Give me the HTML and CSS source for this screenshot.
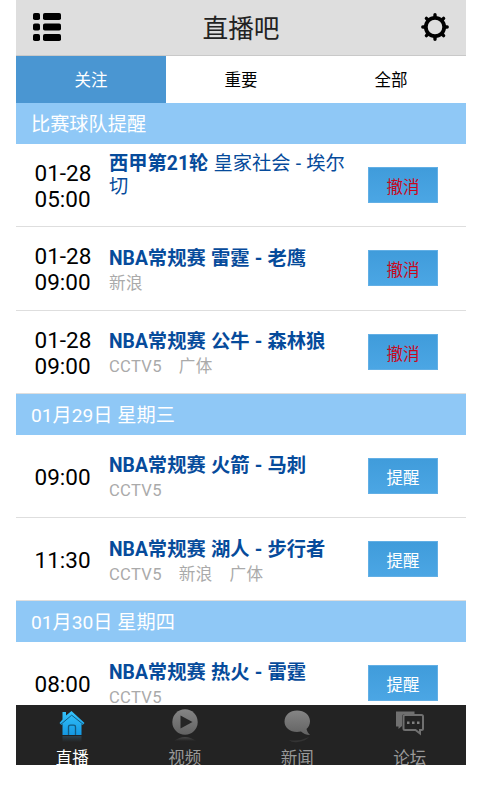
FILE: index.html
```
<!DOCTYPE html>
<html lang="zh-CN">
<head>
  <meta charset="UTF-8">
  <meta name="viewport" content="width=device-width, initial-scale=1.0">
  <title>直播吧</title>
  <link rel="stylesheet" href="styles.css">
</head>
<body>
  <div class="app">
    <header class="header">
      <svg class="menu-icon" width="28" height="28" viewBox="0 0 28 28">
        <rect x="0" y="0" width="7" height="7" rx="1.8"/>
        <rect x="10" y="0" width="18" height="7" rx="1.8"/>
        <rect x="0" y="10.5" width="7" height="7" rx="1.8"/>
        <rect x="10" y="10.5" width="18" height="7" rx="1.8"/>
        <rect x="0" y="21" width="7" height="7" rx="1.8"/>
        <rect x="10" y="21" width="18" height="7" rx="1.8"/>
      </svg>
      <h1>直播吧</h1>
      <svg class="gear-icon" width="28" height="28" viewBox="-14 -14 28 28">
        <circle r="9.2" fill="none" stroke="#000" stroke-width="3.8"/>
        <g stroke="#000" stroke-width="3.4" stroke-linecap="round">
          <path d="M0-10V-12.2M0 10V12.2M-10 0H-12.2M10 0H12.2"/>
          <path d="M-7-7L-8.6-8.6M7-7L8.6-8.6M-7 7L-8.6 8.6M7 7L8.6 8.6"/>
        </g>
      </svg>
    </header>

    <nav class="tabs">
      <a class="tab active">关注</a>
      <a class="tab">重要</a>
      <a class="tab">全部</a>
    </nav>

    <main class="list">
      <h2 class="section">比赛球队提醒</h2>
      <div class="row">
        <div class="time">01-28<br>05:00</div>
        <div class="info">
          <div class="match"><b>西甲第21轮</b> 皇家社会 - 埃尔切</div>
          <div class="channel"></div>
        </div>
        <button class="btn cancel">撤消</button>
      </div>
      <div class="row">
        <div class="time">01-28<br>09:00</div>
        <div class="info">
          <div class="match"><b>NBA常规赛 雷霆 - 老鹰</b></div>
          <div class="channel"><span>新浪</span></div>
        </div>
        <button class="btn cancel">撤消</button>
      </div>
      <div class="row">
        <div class="time">01-28<br>09:00</div>
        <div class="info">
          <div class="match"><b>NBA常规赛 公牛 - 森林狼</b></div>
          <div class="channel"><span>CCTV5</span><span>广体</span></div>
        </div>
        <button class="btn cancel">撤消</button>
      </div>

      <h2 class="section">01月29日 星期三</h2>
      <div class="row">
        <div class="time">09:00</div>
        <div class="info">
          <div class="match"><b>NBA常规赛 火箭 - 马刺</b></div>
          <div class="channel"><span>CCTV5</span></div>
        </div>
        <button class="btn">提醒</button>
      </div>
      <div class="row">
        <div class="time">11:30</div>
        <div class="info">
          <div class="match"><b>NBA常规赛 湖人 - 步行者</b></div>
          <div class="channel"><span>CCTV5</span><span>新浪</span><span>广体</span></div>
        </div>
        <button class="btn">提醒</button>
      </div>

      <h2 class="section">01月30日 星期四</h2>
      <div class="row">
        <div class="time">08:00</div>
        <div class="info">
          <div class="match"><b>NBA常规赛 热火 - 雷霆</b></div>
          <div class="channel"><span>CCTV5</span></div>
        </div>
        <button class="btn">提醒</button>
      </div>
    </main>

    <footer class="bottom-nav">
      <a class="nav-item active">
        <svg width="32" height="36" viewBox="0 0 32 36">
          <defs>
            <linearGradient id="blue" x1="0" y1="0" x2="0" y2="1">
              <stop offset="0" stop-color="#35c3fb"/>
              <stop offset="1" stop-color="#1498e2"/>
            </linearGradient>
            <linearGradient id="shade" x1="0" y1="0" x2="0" y2="1">
              <stop offset="0" stop-color="#33566a"/>
              <stop offset="1" stop-color="#232323"/>
            </linearGradient>
          </defs>
          <path d="M6.5 27H25.5V33H6.5z" fill="url(#shade)" opacity=".6"/>
          <path d="M6.500 3H10V6.500L15.500 2L28.500 14L26.500 16L25.500 15V26H6.500V15L5.500 16L3.500 14L6.500 10.500z" fill="url(#blue)"/>
          <path d="M5 15.200L15.700 6.200L27 15.200" fill="none" stroke="#125b82" stroke-width="1"/>
          <path d="M12.500 26V18Q12.500 16.200 14.500 16.200H17.500Q19.500 16.200 19.500 18V26" fill="none" stroke="#125b82" stroke-width="1.300"/>
        </svg>
        <span>直播</span>
      </a>
      <a class="nav-item">
        <svg width="32" height="36" viewBox="0 0 32 36">
          <defs>
            <linearGradient id="gray" x1="0" y1="0" x2="0" y2="1">
              <stop offset="0" stop-color="#858585"/>
              <stop offset="1" stop-color="#626262"/>
            </linearGradient>
            <linearGradient id="fade" x1="0" y1="0" x2="0" y2="1">
              <stop offset="0" stop-color="#484848"/>
              <stop offset="1" stop-color="#232323"/>
            </linearGradient>
          </defs>
          <path d="M5 32Q16 24 27 32z" fill="url(#fade)"/>
          <circle cx="16" cy="13" r="12.700" fill="url(#gray)"/>
          <path d="M11.500 6.500L23.500 13L11.500 19.500z" fill="#262626"/>
        </svg>
        <span>视频</span>
      </a>
      <a class="nav-item">
        <svg width="32" height="36" viewBox="0 0 32 36">
          <path d="M8 31Q18 33 28 28Q25 32 17 33Q11 34 8 31z" fill="#343434"/>
          <path d="M16 1.500C23.500 1.500 29 6 29 12.200C29 15.500 27.500 18.200 25.500 20C26 22.500 27.500 24.500 29 26C25 25.800 22 24.500 20 22.500C11 24.500 3.500 19.500 3.500 12.500C3.500 6 9 1.500 16 1.500z" fill="url(#gray)"/>
        </svg>
        <span>新闻</span>
      </a>
      <a class="nav-item">
        <svg width="32" height="36" viewBox="0 0 32 36">
          <path d="M2 2.500H20.500V5H11Q8 5 8 8V17L4.500 20V17.500H2z" fill="#707070"/>
          <path d="M11 6H27.500Q29 6 29 7.500V19.500Q29 21 27.500 21H26V24.500L21.500 21H11Q9.500 21 9.500 19.500V7.500Q9.500 6 11 6z" fill="#232323" stroke="#707070" stroke-width="2"/>
          <path d="M13 12.500h2.500v2.500h-2.500zM18 12.500h2.500v2.500h-2.500zM23 12.500h2.500v2.500h-2.500z" fill="#808080"/>
        </svg>
        <span>论坛</span>
      </a>
    </footer>
  </div>
</body>
</html>
```
FILE: styles.css
```
* {
  box-sizing: border-box;
}
body {
  margin: 0;
  background-color: #fff;
  font-family: Roboto, "Noto Sans CJK SC", sans-serif;
  color: #000;
}
.app {
  display: flex;
  flex-direction: column;
  width: 450px;
  height: 765px;
  margin-left: 16px;
  overflow: hidden;
}
.header {
  display: flex;
  flex-shrink: 0;
  align-items: center;
  justify-content: space-between;
  height: 56px;
  padding: 0 17px 1px;
  background-color: #dedede;
  border-bottom: 1px solid #c9c9c9;
}
.header h1 {
  margin: 0;
  padding-top: 3px;
  font-size: 25.7px;
  font-weight: 400;
  line-height: 50px;
  color: #222;
}
.tabs {
  display: flex;
  flex-shrink: 0;
  height: 47.3px;
}
.tab {
  flex: 1;
  font-size: 16.5px;
  line-height: 50px;
  text-align: center;
}
.tab.active {
  background-color: #4a96d2;
  color: #fff;
}
.list {
  flex: 1;
  min-height: 0;
  overflow: hidden;
}
.section {
  height: 40.7px;
  margin: 0;
  padding-left: 15px;
  background-color: #8fc8f6;
  color: #fff;
  font-size: 19.2px;
  font-weight: 400;
  line-height: 43px;
}
.row {
  display: flex;
  align-items: center;
  height: 83.3px;
  padding: 0 28px 0 18.5px;
  border-bottom: 1px solid #dedede;
}
.time {
  width: 74.5px;
  font-size: 22.5px;
  line-height: 26px;
  padding-top: 2px;
}
.info {
  width: 245px;
  padding-top: 5px;
}
.match {
  color: #064b9b;
  font-size: 19.3px;
  line-height: 23.5px;
  word-spacing: 0.4px;
}
.channel {
  min-height: 22px;
  margin-top: 2.5px;
  color: #aaa;
  font-size: 16.6px;
  line-height: 22px;
  letter-spacing: 0.3px;
}
.channel span {
  margin-right: 17px;
}
.btn {
  width: 70px;
  height: 36px;
  margin-left: auto;
  padding: 2px 0 0;
  border: 1px solid #62afe5;
  background: linear-gradient(#409cdb, #4ba6e4);
  color: #fff;
  font-family: inherit;
  font-size: 16.5px;
}
.btn.cancel {
  color: #c9081c;
}
.bottom-nav {
  display: flex;
  flex-shrink: 0;
  height: 60px;
  background-color: #232323;
  overflow: hidden;
}
.nav-item {
  display: flex;
  flex: 1;
  flex-direction: column;
  align-items: center;
  padding-top: 4px;
  color: #999;
  font-size: 16.5px;
  line-height: 28px;
}
.nav-item svg {
  flex-shrink: 0;
}
.nav-item.active {
  color: #fff;
}
```
